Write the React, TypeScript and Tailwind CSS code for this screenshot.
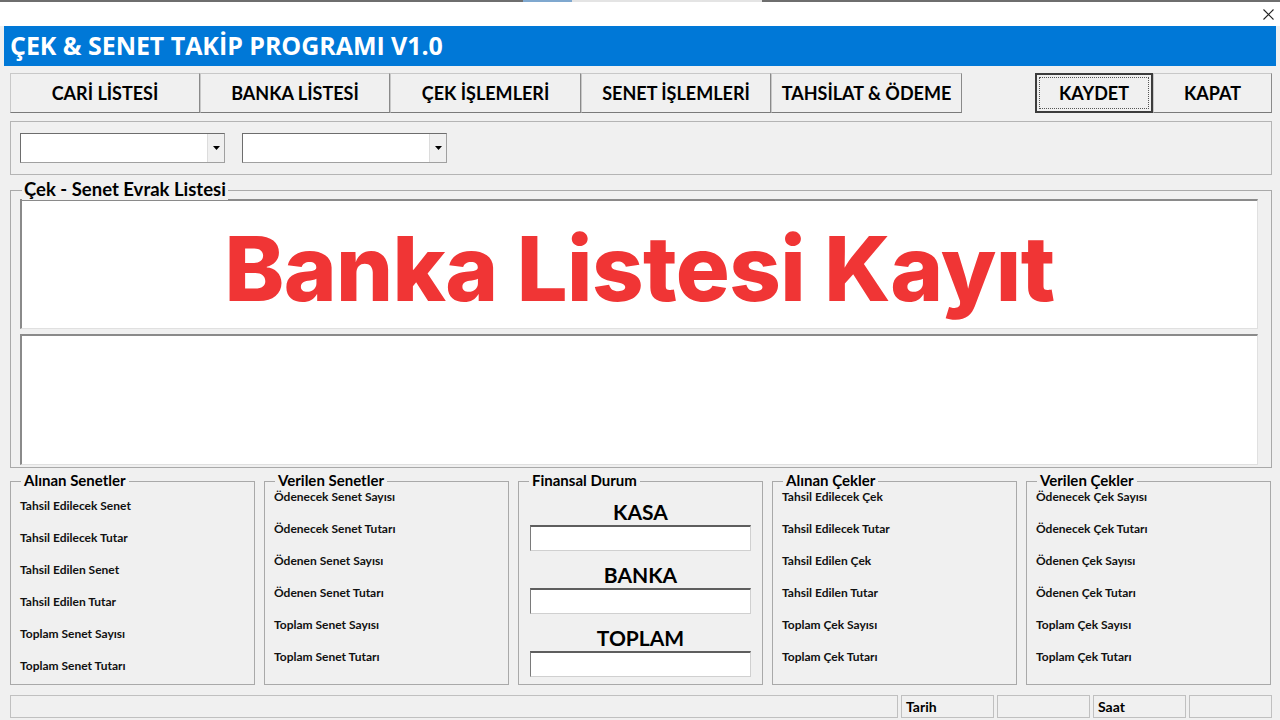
import React from "react";

const ui = { fontFamily: "Lato, 'Open Sans', sans-serif" };

function NavButton({ label, w }: { label: string; w: string }) {
  return (
    <div
      className={`${w} h-[40px] flex items-center justify-center bg-[#f0f0f0] border border-[#c8c8c8] border-b-[#7a7a7a] border-r-[#8a8a8a] text-[18px] font-bold text-black`}
    >
      {label}
    </div>
  );
}

function Combo() {
  return (
    <div className="w-[205px] h-[30px] flex bg-white border border-[#a0a0a0] border-t-[#6d6d6d] border-l-[#6d6d6d]">
      <div className="flex-1" />
      <div className="w-[17px] flex items-center justify-center bg-[#f0f0f0] border-l border-[#dcdcdc]">
        <svg width="7" height="4" viewBox="0 0 7 4">
          <path d="M0 0h7L3.5 4z" fill="#000" />
        </svg>
      </div>
    </div>
  );
}

function Group({
  title,
  items,
  offset,
}: {
  title: string;
  items: string[];
  offset: boolean;
}) {
  return (
    <div className="relative w-[245px] h-[204px] border border-[#a9a9a9]">
      <div className="absolute left-[10px] top-[-11px] px-[3px] bg-[#f0f0f0] text-[15px] font-bold leading-[18px]">
        {title}
      </div>
      <div className={`flex flex-col pl-[9px] ${offset ? "pt-[17px]" : "pt-[8px]"}`}>
        {items.map((t) => (
          <div key={t} className="h-[32px] text-[12px] font-bold text-[#111] leading-[14px]">
            {t}
          </div>
        ))}
      </div>
    </div>
  );
}

function Money({ label }: { label: string }) {
  return (
    <div className="flex flex-col items-center">
      <div className="text-[21px] font-bold leading-[26px] text-black">{label}</div>
      <div className="w-[221px] h-[26px] bg-white border border-[#d0d0d0] border-t-[#5e5e5e] border-l-[#7a7a7a] border-t-2" />
    </div>
  );
}

export default function App() {
  return (
    <div className="w-[1280px] h-[720px] bg-[#f0f0f0] overflow-hidden" style={ui}>
      {/* window top edge */}
      <div className="h-[2px] flex">
        <div className="w-[523px] bg-[#6e6e6e]" />
        <div className="w-[49px] bg-[#7fa8cf]" />
        <div className="w-[190px] bg-[#e4e4e4]" />
        <div className="flex-1 bg-[#6e6e6e]" />
      </div>
      <div className="h-[24px] bg-white flex justify-end items-center pr-[6px]">
        <svg width="11" height="11" viewBox="0 0 11 11">
          <path d="M0.5 0.5l10 10M10.5 0.5l-10 10" stroke="#222" strokeWidth="1.1" />
        </svg>
      </div>

      {/* title bar */}
      <div className="mx-[4px] h-[40px] bg-[#0078d7] flex items-center pl-[6px]">
        <span className="text-white text-[25px] font-bold tracking-[-0.05px]" style={{ fontFamily: "'Open Sans', sans-serif" }}>
          ÇEK &amp; SENET TAKİP PROGRAMI V1.0
        </span>
      </div>

      {/* toolbar */}
      <div className="flex mt-[7px] pl-[10px] h-[40px]">
        <NavButton label="CARİ LİSTESİ" w="w-[190px]" />
        <NavButton label="BANKA LİSTESİ" w="w-[190px]" />
        <NavButton label="ÇEK İŞLEMLERİ" w="w-[191px]" />
        <NavButton label="SENET İŞLEMLERİ" w="w-[190px]" />
        <NavButton label="TAHSİLAT & ÖDEME" w="w-[191px]" />
        <div className="w-[73px]" />
        <div className="w-[118px] h-[40px] border-2 border-[#3c3c3c] p-[2px]">
          <div className="w-full h-full border border-dotted border-[#555] flex items-center justify-center text-[18px] font-bold">
            KAYDET
          </div>
        </div>
        <NavButton label="KAPAT" w="w-[119px]" />
      </div>

      {/* filter frame */}
      <div className="mt-[8px] ml-[10px] w-[1262px] h-[54px] border border-[#b4b4b4] flex items-center gap-[17px] pl-[9px]">
        <Combo />
        <Combo />
      </div>

      {/* document list */}
      <div className="relative mt-[15px] ml-[10px] w-[1262px] h-[278px] border border-[#a9a9a9]">
        <div className="absolute left-[11px] top-[-12px] px-[2px] bg-[#f0f0f0] text-[18.5px] font-bold leading-[21px]">
          Çek - Senet Evrak Listesi
        </div>
        <div className="pt-[8px] pl-[9px] flex flex-col gap-[5px]">
          <div className="w-[1238px] h-[130px] bg-white border-t-2 border-l-2 border-[#8a8a8a] border-r border-b border-r-[#e0e0e0] border-b-[#e0e0e0] flex items-center justify-center">
            <span
              className="text-[#f03535] text-[90px] font-extrabold tracking-[-0.6px] leading-none mt-[8px]"
              style={{ fontFamily: "Inter, 'Open Sans', sans-serif" }}
            >
              Banka Listesi Kayıt
            </span>
          </div>
          <div className="w-[1238px] h-[131px] bg-white border-t-2 border-l-2 border-[#8a8a8a] border-r border-b border-r-[#e0e0e0] border-b-[#e0e0e0]" />
        </div>
      </div>

      {/* summary groups */}
      <div className="mt-[13px] ml-[10px] flex gap-[9px]">
        <Group
          title="Alınan Senetler"
          offset={true}
          items={[
            "Tahsil Edilecek Senet",
            "Tahsil Edilecek Tutar",
            "Tahsil Edilen Senet",
            "Tahsil Edilen Tutar",
            "Toplam Senet Sayısı",
            "Toplam Senet Tutarı",
          ]}
        />
        <Group
          title="Verilen Senetler"
          offset={false}
          items={[
            "Ödenecek Senet Sayısı",
            "Ödenecek Senet Tutarı",
            "Ödenen Senet Sayısı",
            "Ödenen Senet Tutarı",
            "Toplam Senet Sayısı",
            "Toplam Senet Tutarı",
          ]}
        />
        <div className="relative w-[245px] h-[204px] border border-[#a9a9a9]">
          <div className="absolute left-[10px] top-[-11px] px-[3px] bg-[#f0f0f0] text-[15px] font-bold leading-[18px]">
            Finansal Durum
          </div>
          <div className="pt-[17px] flex flex-col gap-[11px]">
            <Money label="KASA" />
            <Money label="BANKA" />
            <Money label="TOPLAM" />
          </div>
        </div>
        <Group
          title="Alınan Çekler"
          offset={false}
          items={[
            "Tahsil Edilecek Çek",
            "Tahsil Edilecek Tutar",
            "Tahsil Edilen Çek",
            "Tahsil Edilen Tutar",
            "Toplam Çek Sayısı",
            "Toplam Çek Tutarı",
          ]}
        />
        <Group
          title="Verilen Çekler"
          offset={false}
          items={[
            "Ödenecek Çek Sayısı",
            "Ödenecek Çek Tutarı",
            "Ödenen Çek Sayısı",
            "Ödenen Çek Tutarı",
            "Toplam Çek Sayısı",
            "Toplam Çek Tutarı",
          ]}
        />
      </div>

      {/* status bar */}
      <div className="mt-[10px] ml-[10px] flex gap-[3px] h-[23px]">
        <div className="w-[888px] border border-[#c0c0c0]" />
        <div className="w-[93px] border border-[#c0c0c0] flex items-center pl-[4px] text-[14px] font-bold">Tarih</div>
        <div className="w-[93px] border border-[#c0c0c0]" />
        <div className="w-[93px] border border-[#c0c0c0] flex items-center pl-[4px] text-[14px] font-bold">Saat</div>
        <div className="w-[83px] border border-[#c0c0c0]" />
      </div>
    </div>
  );
}
